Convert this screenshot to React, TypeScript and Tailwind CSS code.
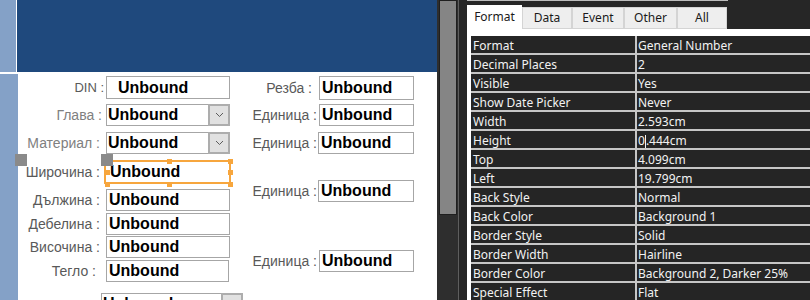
import React from 'react';

const properties: [string, string][] = [
  ['Format', 'General Number'],
  ['Decimal Places', '2'],
  ['Visible', 'Yes'],
  ['Show Date Picker', 'Never'],
  ['Width', '2.593cm'],
  ['Height', '0.444cm'],
  ['Top', '4.099cm'],
  ['Left', '19.799cm'],
  ['Back Style', 'Normal'],
  ['Back Color', 'Background 1'],
  ['Border Style', 'Solid'],
  ['Border Width', 'Hairline'],
  ['Border Color', 'Background 2, Darker 25%'],
  ['Special Effect', 'Flat'],
];

const tabs = [
  { name: 'Data', w: 'w-[50px]' },
  { name: 'Event', w: 'w-[52px]' },
  { name: 'Other', w: 'w-[53px]' },
  { name: 'All', w: 'w-[50px]' },
];

function Chevron() {
  return (
    <svg width="9" height="6" viewBox="0 0 9 6" fill="none">
      <path d="M1 1L4.5 4.5L8 1" stroke="#5c5c5c" strokeWidth="1" />
    </svg>
  );
}

function TextBox({ w = 'w-[124px]', h = 'h-[22px]', pad = 'pl-[2px]' }: { w?: string; h?: string; pad?: string }) {
  return (
    <div className={`${w} ${h} ${pad} shrink-0 flex items-center border border-[#a6a6a6] bg-white text-[16px] font-bold leading-none text-black`}>
      Unbound
    </div>
  );
}

function ComboBox({ w = 'w-[124px]' }: { w?: string }) {
  return (
    <div className={`${w} h-[22px] shrink-0 flex border border-[#a6a6a6] bg-white`}>
      <div className="flex-1 pl-[1px] flex items-center text-[16px] font-bold leading-none text-black overflow-hidden">Unbound</div>
      <div className="w-[22px] -my-px -mr-px flex items-center justify-center bg-[#e1e1e1] border-2 border-[#adadad]">
        <Chevron />
      </div>
    </div>
  );
}

function Handle({ pos }: { pos: string }) {
  return <div className={`absolute w-[5px] h-[5px] bg-[#f7a63d] ${pos}`} />;
}

export default function App() {
  return (
    <div className="w-[810px] h-[300px] overflow-hidden flex bg-[#262626] font-['Liberation_Sans',Arial,sans-serif]">
      {/* Form design canvas */}
      <div className="w-[437px] h-[300px] flex flex-col overflow-hidden">
        <div className="h-[72px] shrink-0 flex">
          <div className="w-[16px] bg-[#84a1c7]" />
          <div className="w-px bg-white" />
          <div className="flex-1 bg-[#1f497d]" />
        </div>
        <div className="h-[2px] shrink-0 bg-white" />
        <div className="flex-1 min-h-0 flex relative">
          <div className="w-[18px] bg-[#84a1c7]" />
          <div className="flex-1 bg-white flex">
            {/* left column */}
            <div className="w-[225px] flex flex-col pt-[2px] text-[14px] text-[#595959]">
              <div className="flex items-center h-[23px] shrink-0">
                <div className="w-[88px] pr-[2px] text-right text-[13px]">DIN :</div>
                <TextBox h="h-[23px]" pad="pl-[11px]" />
              </div>
              <div className="flex items-center h-[22px] shrink-0 mt-[5px]">
                <div className="w-[88px] pr-[4px] text-right text-[#808080]">Глава :</div>
                <ComboBox />
              </div>
              <div className="flex items-center h-[22px] shrink-0 mt-[6px]">
                <div className="w-[88px] pr-[6px] text-right text-[#808080]">Материал :</div>
                <ComboBox />
              </div>
              <div className="flex items-center h-[24px] shrink-0 mt-[6px]">
                <div className="w-[86px] pr-[4px] text-right">Широчина :</div>
                <div className="relative w-[127px] h-[24px] border-2 border-[#f7a63d] pl-[4px] flex items-center text-[16px] font-bold leading-none text-black">
                  Unbound
                  <Handle pos="-left-[1px] -top-[3px]" />
                  <Handle pos="left-[61px] -top-[3px]" />
                  <Handle pos="left-[122px] -top-[3px]" />
                  <Handle pos="-left-[1px] top-[8px]" />
                  <Handle pos="left-[122px] top-[8px]" />
                  <Handle pos="-left-[1px] top-[20px]" />
                  <Handle pos="left-[61px] top-[20px]" />
                  <Handle pos="left-[122px] top-[20px]" />
                </div>
              </div>
              <div className="flex items-center h-[22px] shrink-0 mt-[5px]">
                <div className="w-[88px] pr-[6px] text-right">Дължина :</div>
                <TextBox />
              </div>
              <div className="flex items-center h-[22px] shrink-0 mt-[2px]">
                <div className="w-[88px] pr-[6px] text-right">Дебелина :</div>
                <TextBox />
              </div>
              <div className="flex items-center h-[22px] shrink-0 mt-px">
                <div className="w-[88px] pr-[6px] text-right">Височина :</div>
                <TextBox />
              </div>
              <div className="flex items-center h-[22px] shrink-0 mt-[2px]">
                <div className="w-[88px] pr-[10px] text-right">Тегло :</div>
                <TextBox w="w-[123px]" />
              </div>
              <div className="flex items-center h-[22px] shrink-0 mt-[11px]">
                <div className="w-[84px]" />
                <ComboBox w="w-[142px]" />
              </div>
            </div>
            {/* right column */}
            <div className="flex flex-col pt-[2px] text-[14px] text-[#595959]">
              <div className="flex items-center h-[24px] shrink-0">
                <div className="w-[76px] pr-[7px] text-right">Резба :</div>
                <TextBox w="w-[95px]" h="h-[24px]" />
              </div>
              <div className="flex items-center h-[22px] shrink-0 mt-[4px]">
                <div className="w-[76px] pr-[2px] text-right">Единица :</div>
                <TextBox w="w-[95px]" />
              </div>
              <div className="flex items-center h-[22px] shrink-0 mt-[6px]">
                <div className="w-[75px] pr-[1px] text-right">Единица :</div>
                <TextBox w="w-[96px]" />
              </div>
              <div className="flex items-center h-[22px] shrink-0 mt-[26px]">
                <div className="w-[75px] pr-[1px] text-right">Единица :</div>
                <TextBox w="w-[96px]" />
              </div>
              <div className="flex items-center h-[22px] shrink-0 mt-[48px]">
                <div className="w-[76px] pr-[2px] text-right">Единица :</div>
                <TextBox w="w-[95px]" />
              </div>
            </div>
          </div>
          {/* move handles */}
          <div className="absolute left-[15px] top-[80px] w-[12px] h-[12px] bg-[#8a8a8a]" />
          <div className="absolute left-[101px] top-[80px] w-[12px] h-[12px] bg-[#8a8a8a]" />
        </div>
      </div>

      {/* Vertical scrollbar */}
      <div className="w-[21px] bg-[#2e2e2e] pl-[2px]">
        <div className="w-[18px] h-[215px] bg-[#858585] border border-[#1f1f1f]" />
      </div>
      <div className="w-px bg-[#5e5e5e]" />

      {/* Property sheet */}
      <div className="flex-1 pl-[8px] flex flex-col font-['Noto_Sans',sans-serif] text-[12px]">
        <div className="w-[261px] h-px bg-[#bdbdbd]" />
        <div className="flex items-end h-[24px] mt-[4px]">
          <div className="w-[55px] h-[24px] bg-white text-[#1a1a1a] flex items-center justify-center">Format</div>
          {tabs.map((t) => (
            <div
              key={t.name}
              className={`${t.w} h-[22px] bg-[#eeeeee] border border-[#d4d4d4] text-[#1a1a1a] flex items-center justify-center`}
            >
              {t.name}
            </div>
          ))}
        </div>
        <div className="flex-1 bg-white pt-[7px] pl-[4px]">
          <div className="grid grid-cols-[164px_1fr] gap-[2px] bg-[#c6c6c6]">
            {properties.map(([label, value]) => (
              <React.Fragment key={label}>
                <div className="h-[17px] bg-[#252525] text-[#f2f2f2] pl-[2px] leading-[19px] whitespace-nowrap overflow-hidden">
                  {label}
                </div>
                <div className="h-[17px] bg-[#252525] text-[#f2f2f2] pl-[1px] leading-[19px] whitespace-nowrap overflow-hidden">
                  {label === 'Height' ? (
                    <>
                      0<span className="inline-block w-px h-[13px] bg-[#f2f2f2] align-middle" />.444cm
                    </>
                  ) : (
                    value
                  )}
                </div>
              </React.Fragment>
            ))}
          </div>
        </div>
      </div>
    </div>
  );
}
